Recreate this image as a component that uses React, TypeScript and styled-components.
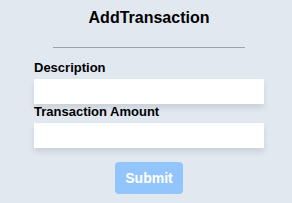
import styled, { createGlobalStyle } from "styled-components";

const GlobalStyle = createGlobalStyle`
  body {
    margin: 0;
    background-color: #e2e8f0;
    font-family: "Liberation Sans", Arial, sans-serif;
  }
`;

const AddTransaction = () => {
  return (
    <FormStyles>
      <GlobalStyle />
      <h2 className="form-title">AddTransaction</h2>
      <Divider />
      <Field>
        <label htmlFor="description">Description</label>
        <input id="description" type="text" />
      </Field>
      <Field>
        <label htmlFor="amount">Transaction Amount</label>
        <input id="amount" type="text" />
      </Field>
      <SubmitButton type="button" disabled>
        Submit
      </SubmitButton>
    </FormStyles>
  );
};

export default AddTransaction;

const FormStyles = styled.form`
  display: flex;
  flex-direction: column;
  padding: 9px 28px 0 34px;

  .form-title {
    margin: 0;
    text-align: center;
    font-size: 16px;
    line-height: 18px;
    font-weight: 700;
    color: #000;
  }
`;

const Divider = styled.div`
  align-self: center;
  width: 192px;
  height: 1px;
  background-color: #9ca3af;
  margin: 20px 0 12px;
`;

const Field = styled.div`
  display: flex;
  flex-direction: column;

  label {
    font-size: 13px;
    line-height: 15px;
    font-weight: 700;
    color: #000;
    margin-bottom: 4px;
  }

  input {
    width: 230px;
    height: 25px;
    box-sizing: border-box;
    border: none;
    outline: none;
    background: #fff;
    box-shadow: 0 4px 6px rgba(0, 0, 0, 0.1);
    padding: 0 6px;
  }
`;

const SubmitButton = styled.button`
  align-self: center;
  width: 68px;
  height: 32px;
  margin-top: 14px;
  border: none;
  border-radius: 4px;
  background-color: #93c5fd;
  color: #fff;
  font-family: inherit;
  font-size: 14px;
  font-weight: 700;
`;
